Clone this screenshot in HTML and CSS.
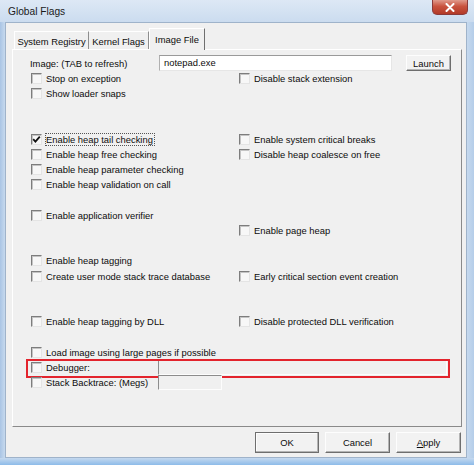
FILE: index.html
```html
<!DOCTYPE html>
<html>
<head>
<meta charset="utf-8">
<link rel="stylesheet" href="styles.css">
</head>
<body>
<div class="window">
  <div class="titlebar">
    <span class="title">Global Flags</span>
    <div class="close">
      <svg width="10" height="9" viewBox="0 0 10 9"><path d="M1.5 1 L8.5 8 M8.5 1 L1.5 8" stroke="#fff" stroke-width="2" stroke-linecap="round"/></svg>
    </div>
  </div>
  <div class="body">
    <div class="frame-l"></div>
    <div class="client">
      <div class="tabs">
        <div class="tab tab-sys">System Registry</div>
        <div class="tab tab-kernel">Kernel Flags</div>
        <div class="tab tab-image active">Image File</div>
      </div>
      <div class="panel">
        <div class="image-row">
          <span class="image-label">Image: (TAB to refresh)</span>
          <div class="textbox">notepad.exe</div>
          <div class="btn launch">Launch</div>
        </div>
        <div class="flags">
          <div class="row">
            <label class="cb"><span class="box"></span>Stop on exception</label>
            <label class="cb"><span class="box"></span>Disable stack extension</label>
          </div>
          <div class="row">
            <label class="cb"><span class="box"></span>Show loader snaps</label>
          </div>
          <div class="row gap-2">
            <label class="cb focus"><span class="box checked"><svg width="9" height="9" viewBox="0 0 9 9"><path d="M1.2 4.2 L3.4 6.6 L7.8 1.6" fill="none" stroke="#111" stroke-width="1.8"/></svg></span><span class="focus-text">Enable heap tail checking</span></label>
            <label class="cb"><span class="box"></span>Enable system critical breaks</label>
          </div>
          <div class="row">
            <label class="cb"><span class="box"></span>Enable heap free checking</label>
            <label class="cb"><span class="box"></span>Disable heap coalesce on free</label>
          </div>
          <div class="row">
            <label class="cb"><span class="box"></span>Enable heap parameter checking</label>
          </div>
          <div class="row">
            <label class="cb"><span class="box"></span>Enable heap validation on call</label>
          </div>
          <div class="row gap-1">
            <label class="cb"><span class="box"></span>Enable application verifier</label>
          </div>
          <div class="row">
            <span></span>
            <label class="cb"><span class="box"></span>Enable page heap</label>
          </div>
          <div class="row gap-1">
            <label class="cb"><span class="box"></span>Enable heap tagging</label>
          </div>
          <div class="row">
            <label class="cb"><span class="box"></span>Create user mode stack trace database</label>
            <label class="cb"><span class="box"></span>Early critical section event creation</label>
          </div>
          <div class="row gap-2">
            <label class="cb"><span class="box"></span>Enable heap tagging by DLL</label>
            <label class="cb"><span class="box"></span>Disable protected DLL verification</label>
          </div>
          <div class="row gap-1">
            <label class="cb"><span class="box"></span>Load image using large pages if possible</label>
          </div>
          <div class="row field-row">
            <label class="cb"><span class="box"></span>Debugger:</label>
            <div class="field field-debugger"></div>
            <div class="highlight"></div>
          </div>
          <div class="row field-row">
            <label class="cb"><span class="box"></span>Stack Backtrace: (Megs)</label>
            <div class="field field-stack"></div>
          </div>
        </div>
      </div>
      <div class="buttons">
        <div class="btn dlg default">OK</div>
        <div class="btn dlg">Cancel</div>
        <div class="btn dlg"><u>A</u>pply</div>
      </div>
    </div>
    <div class="frame-r"></div>
  </div>
  <div class="frame-b"></div>
</div>
</body>
</html>
```

FILE: styles.css
```css
* { box-sizing: border-box; }
html, body { margin: 0; padding: 0; }
body {
  width: 474px;
  height: 465px;
  overflow: hidden;
  background: #c8daee;
  font-family: "Liberation Sans", Arial, sans-serif;
  font-size: 9.4px;
  color: #0c0c0c;
}
.window {
  width: 474px;
  height: 465px;
  display: flex;
  flex-direction: column;
  background: #c9dbef;
}
.titlebar {
  height: 22px;
  display: flex;
  justify-content: space-between;
  align-items: flex-start;
  background: linear-gradient(#dde8f5, #cbdcef);
}
.title {
  font-size: 10.2px;
  line-height: 24px;
  padding-left: 8px;
  color: #1a1a1a;
}
.close {
  width: 36px;
  height: 15px;
  margin-right: 6px;
  border: 1px solid #8a3a3a;
  border-top: none;
  border-radius: 0 0 5px 5px;
  background: linear-gradient(#e09a8c, #c9533f 45%, #b23a28);
  display: flex;
  align-items: center;
  justify-content: center;
}
.body {
  flex: 1;
  display: flex;
}
.frame-l {
  width: 5px;
  background: linear-gradient(90deg, #a9c4e4, #c6d9ee);
}
.frame-r {
  width: 7px;
  background: linear-gradient(90deg, #c6d9ee, #b4cde9);
}
.frame-b {
  height: 7px;
  background: linear-gradient(#c5d9ef, #8dbbe9);
}
.client {
  flex: 1;
  background: #f0f0f0;
  border: 1px solid #9fb3ca;
  display: flex;
  flex-direction: column;
}
.tabs {
  height: 21px;
  margin-top: 5px;
  padding-left: 8px;
  display: flex;
  align-items: flex-end;
  position: relative;
  z-index: 1;
}
.tab {
  height: 18px;
  padding-top: 4px;
  text-align: center;
  white-space: nowrap;
  border-top: 1px solid #fff;
  border-left: 1px solid #fff;
  border-right: 1px solid #8e8e8e;
  background: #f0f0f0;
}
.tab-sys { width: 75px; }
.tab-kernel { width: 60px; border-left: none; }
.tab-image { width: 56px; }
.tab.active {
  height: 22px;
  margin-bottom: -1px;
  padding-top: 5px;
  border-right: 1px solid #6f6f6f;
}
.panel {
  height: 378px;
  margin-left: 6px;
  margin-right: 4px;
  border-top: 1px solid #fff;
  border-left: 1px solid #fff;
  border-right: 1px solid #8a8a8a;
  border-bottom: 1px solid #8a8a8a;
  padding-top: 5px;
}
.image-row {
  height: 16px;
  display: grid;
  grid-template-columns: 129px 233px 59px;
  padding-left: 17px;
  align-items: center;
}
.image-label { white-space: nowrap; }
.textbox {
  height: 16px;
  background: #fff;
  border-top: 1px solid #9a9a9a;
  border-left: 1px solid #b0b0b0;
  border-right: 1px solid #e6e6e6;
  border-bottom: 1px solid #e6e6e6;
  padding-left: 4px;
  line-height: 14px;
}
.btn {
  display: flex;
  align-items: center;
  justify-content: center;
  background: #f2f2f2;
  border-top: 1px solid #fdfdfd;
  border-left: 1px solid #fdfdfd;
  border-right: 1px solid #6e6e6e;
  border-bottom: 1px solid #6e6e6e;
  box-shadow: inset -1px -1px 0 #b4b4b4;
}
.launch {
  width: 45px;
  height: 16px;
  margin-left: 14px;
}
.flags {
  padding-left: 18px;
}
.row {
  height: 15.2px;
  display: grid;
  grid-template-columns: 208px 1fr;
  align-items: center;
  position: relative;
}
.gap-1 { margin-top: 15.2px; }
.gap-2 { margin-top: 30.4px; }
.cb {
  display: flex;
  align-items: center;
  white-space: nowrap;
}
.box {
  width: 11px;
  height: 11px;
  margin-right: 4px;
  flex: none;
  background: #f7f7f7;
  border-top: 1px solid #7d7d7d;
  border-left: 1px solid #7d7d7d;
  border-right: 1px solid #e4e4e4;
  border-bottom: 1px solid #e4e4e4;
  box-shadow: inset 1px 1px 0 #c4c4c4;
  display: flex;
  align-items: center;
  justify-content: center;
}
.focus-text {
  outline: 1px dotted #555;
  outline-offset: 0;
  padding-right: 1px;
}
.field-row {
  grid-template-columns: 127px 1fr;
}
.field {
  height: 15px;
  background: #f0f0f0;
  border-top: 1px solid #8c8c8c;
  border-left: 1px solid #8c8c8c;
  border-right: 1px solid #fdfdfd;
  border-bottom: 1px solid #fdfdfd;
}
.field-debugger { width: 289px; }
.field-stack { width: 64px; }
.highlight {
  position: absolute;
  left: -5px;
  top: -1px;
  width: 424px;
  height: 19px;
  border: 2px solid #e3242d;
}
.buttons {
  margin-top: 5px;
  margin-right: 5px;
  height: 21px;
  display: flex;
  justify-content: flex-end;
  gap: 6px;
}
.dlg { width: 65px; height: 21px; }
.default {
  width: 64px;
  border-top-color: #6e6e6e;
  border-left-color: #6e6e6e;
  box-shadow: inset -1px -1px 0 #b4b4b4, inset 1px 1px 0 #fdfdfd;
}
```
